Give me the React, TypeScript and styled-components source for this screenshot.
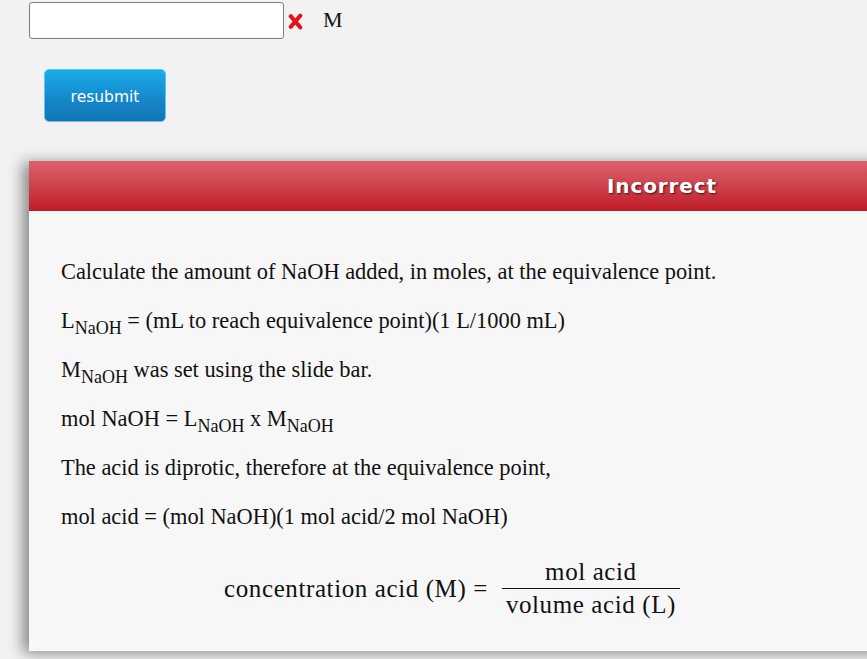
import React from "react";
import styled, { createGlobalStyle } from "styled-components";

const Global = createGlobalStyle`
  html, body { margin: 0; padding: 0; background: #fdfdfd; overflow: hidden; }
  body { font-family: "Liberation Serif", "Times New Roman", serif; }
`;

const Page = styled.div`
  background: #f2f2f2;
  overflow: hidden;
  width: 867px;
  padding-top: 2px;
`;

const AnswerRow = styled.div`
  display: flex;
  align-items: center;
  margin-left: 29px;
  height: 37px;
`;

const AnswerInput = styled.input`
  box-sizing: border-box;
  width: 255px;
  height: 37px;
  border: 1px solid #7d7d7d;
  border-radius: 3px;
  background: #fff;
  margin: 0;
`;

const WrongMark = styled.svg`
  width: 17px;
  height: 17px;
  margin-left: 3px;
  margin-top: 2px;
`;

const Unit = styled.span`
  font-family: "Liberation Serif", serif;
  font-size: 22px;
  color: #111;
  margin-left: 19px;
  margin-top: -2px;
`;

const Resubmit = styled.button`
  display: block;
  margin: 30px 0 0 44px;
  width: 122px;
  height: 53px;
  border: 1px solid #5fc3ee;
  border-radius: 5px;
  background: linear-gradient(to bottom, #19adeb 0%, #1585c9 60%, #1477b5 100%);
  color: #fff;
  font-family: "DejaVu Sans", Verdana, sans-serif;
  font-size: 15.5px;
  padding: 3px 0 0;
`;

const Panel = styled.section`
  margin: 39px 0 0 29px;
  width: 1266px;
  background: #f7f7f7;
  box-shadow: -6px 2px 14px rgba(0, 0, 0, 0.45);
  margin-bottom: 8px;
`;

const PanelHeader = styled.header`
  height: 50px;
  display: flex;
  align-items: center;
  justify-content: center;
  background: linear-gradient(to bottom, #da626b 0%, #cf4550 45%, #c01c27 100%);
  color: #fff;
  font-family: "DejaVu Sans", Verdana, sans-serif;
  font-weight: bold;
  font-size: 20px;
  letter-spacing: 0.9px;
  text-shadow: 1px 1px 2px rgba(0, 0, 0, 0.7);
`;

const PanelBody = styled.div`
  width: 782px;
  padding: 46px 0 30px 32px;
  color: #111;
  font-family: "Liberation Serif", "Times New Roman", serif;
  font-size: 22.4px;
`;

const Line = styled.p`
  margin: 0 0 20px;
  line-height: 29px;
  sub { font-size: 18px; line-height: 0; vertical-align: -6px; }
`;

const Formula = styled.div`
  display: flex;
  align-items: center;
  justify-content: center;
  gap: 14px;
  margin-top: 25px;
  font-family: "Liberation Serif", serif;
  font-size: 25px;
  letter-spacing: 0.6px;
  color: #111;
`;

const Frac = styled.span`
  display: inline-flex;
  flex-direction: column;
  align-items: center;
  line-height: 32px;
`;

const Numer = styled.span`
  padding: 0 4px;
  border-bottom: 1.5px solid #111;
  align-self: stretch;
  text-align: center;
`;

const Denom = styled.span`
  padding: 0 4px;
`;

export default function App() {
  return (
    <>
      <Global />
      <Page>
        <AnswerRow>
          <AnswerInput type="text" />
          <WrongMark viewBox="0 0 16 16">
            <path d="M3.5 3 L12.5 13.5 M12.5 2.5 L3.5 13" stroke="#e3121b" strokeWidth="3.8" strokeLinecap="round" fill="none" />
          </WrongMark>
          <Unit>M</Unit>
        </AnswerRow>
        <Resubmit>resubmit</Resubmit>
        <Panel>
          <PanelHeader>Incorrect</PanelHeader>
          <PanelBody>
            <Line>Calculate the amount of NaOH added, in moles, at the equivalence point.</Line>
            <Line>L<sub>NaOH</sub> = (mL to reach equivalence point)(1 L/1000 mL)</Line>
            <Line>M<sub>NaOH</sub> was set using the slide bar.</Line>
            <Line>mol NaOH = L<sub>NaOH</sub> x M<sub>NaOH</sub></Line>
            <Line>The acid is diprotic, therefore at the equivalence point,</Line>
            <Line>mol acid = (mol NaOH)(1 mol acid/2 mol NaOH)</Line>
            <Formula>
              <span>concentration acid (M) =</span>
              <Frac>
                <Numer>mol acid</Numer>
                <Denom>volume acid (L)</Denom>
              </Frac>
            </Formula>
          </PanelBody>
        </Panel>
      </Page>
    </>
  );
}
